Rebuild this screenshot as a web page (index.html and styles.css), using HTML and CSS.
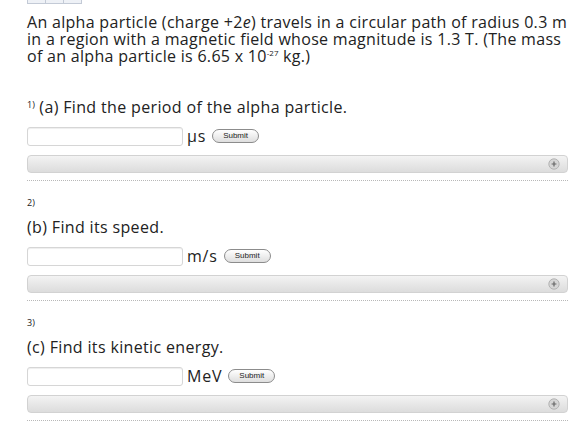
FILE: index.html
```html
<!DOCTYPE html>
<html lang="en">
<head>
    <meta charset="UTF-8">
    <title>alpha particle</title>
    <link rel="stylesheet" href="styles.css">
</head>
<body>

<div class="tools">
    <span></span><span></span><span></span>
</div>

<div class="page">
    <p class="intro">An alpha particle (charge +2<i>e</i>) travels in a circular path of radius 0.3 m in a region with a magnetic field whose magnitude is 1.3 T. (The mass of an alpha particle is 6.65 x 10<sup>-27</sup> kg.)</p>

    <div class="part first">
        <p class="ask"><sup class="tag">1)</sup> (a) Find the period of the alpha particle.</p>
        <div class="answer">
            <input class="field" type="text">
            <span class="unit">&mu;s</span>
            <button class="submit">Submit</button>
        </div>
        <div class="hint">
            <svg width="12" height="12" viewBox="0 0 12 12"><circle cx="6" cy="6" r="5.2" fill="#d6d6d6" stroke="#a8a8a8" stroke-width="0.8"/><path d="M3.6 6h4.8M6 3.6v4.8" stroke="#666" stroke-width="1.2"/></svg>
        </div>
    </div>

    <div class="part">
        <div class="tag">2)</div>
        <p class="ask">(b) Find its speed.</p>
        <div class="answer">
            <input class="field" type="text">
            <span class="unit">m/s</span>
            <button class="submit">Submit</button>
        </div>
        <div class="hint">
            <svg width="12" height="12" viewBox="0 0 12 12"><circle cx="6" cy="6" r="5.2" fill="#d6d6d6" stroke="#a8a8a8" stroke-width="0.8"/><path d="M3.6 6h4.8M6 3.6v4.8" stroke="#666" stroke-width="1.2"/></svg>
        </div>
    </div>

    <div class="part">
        <div class="tag">3)</div>
        <p class="ask">(c) Find its kinetic energy.</p>
        <div class="answer">
            <input class="field" type="text">
            <span class="unit">MeV</span>
            <button class="submit">Submit</button>
        </div>
        <div class="hint">
            <svg width="12" height="12" viewBox="0 0 12 12"><circle cx="6" cy="6" r="5.2" fill="#d6d6d6" stroke="#a8a8a8" stroke-width="0.8"/><path d="M3.6 6h4.8M6 3.6v4.8" stroke="#666" stroke-width="1.2"/></svg>
        </div>
    </div>
</div>

</body>
</html>
```

FILE: styles.css
```css
body{
    margin: 0;
    background: #fff;
    color: #222;
    font-family: "Open Sans", "Liberation Sans", sans-serif;
    font-variant-ligatures: none;
}

/* strip of the toolbar cut off at the top */
.tools{
    display: flex;
    margin-left: 27px;
    height: 4px;
}
.tools span{
    width: 17px;
    border: 1px solid #c3cad6;
    border-top: none;
    border-left: none;
    background: #eef1f6;
}
.tools span:first-child{
    border-left: 1px solid #c3cad6;
}

.page{
    width: 542px;
    margin-left: 27px;
}

.intro{
    margin: 10px 0 0;
    font-size: 16px;
    line-height: 17px;
    letter-spacing: 0.3px;
}
.intro sup{
    font-size: 8px;
    vertical-align: 6px;
    line-height: 0;
    letter-spacing: 0;
}

.part{
    width: 541px;
    padding-bottom: 7px;
    border-bottom: 1px dotted #b8b8b8;
}
.part.first{
    margin-top: 32px;
}
.part + .part{
    padding-top: 17px;
}

.tag{
    font-size: 9px;
    line-height: 10px;
    letter-spacing: 0;
}
sup.tag{
    vertical-align: 5px;
    line-height: 0;
}

.ask{
    margin: 0;
    font-size: 16px;
    line-height: 20px;
    letter-spacing: 0.35px;
}
.tag + .ask{
    margin-top: 9px;
}

.answer{
    display: flex;
    align-items: center;
    height: 20px;
    margin-top: 9px;
}
.field{
    box-sizing: border-box;
    width: 156px;
    height: 19px;
    margin: 0;
    border: 1px solid #d6d6d6;
    border-radius: 3px;
    box-shadow: inset 0 1px 1px #eee;
}
.unit{
    margin-left: 4px;
    font-size: 16px;
    letter-spacing: 0.8px;
}
.submit{
    box-sizing: border-box;
    height: 14px;
    margin-left: 6px;
    padding: 0 10px;
    border: 1px solid #8c8c8c;
    border-radius: 7px;
    background: linear-gradient(#ffffff, #dedede);
    color: #222;
    font-family: "Liberation Sans", sans-serif;
    font-size: 8px;
    line-height: 12px;
}

.hint{
    box-sizing: border-box;
    display: flex;
    align-items: center;
    justify-content: flex-end;
    height: 18px;
    margin-top: 9px;
    padding-right: 7px;
    border: 1px solid #d2d2d2;
    border-radius: 4px;
    background: linear-gradient(#f3f3f3, #dcdcdc);
}
```
